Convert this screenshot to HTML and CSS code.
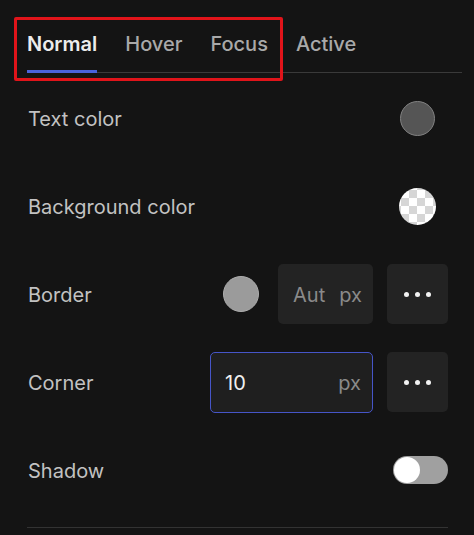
FILE: index.html
```html
<!DOCTYPE html>
<html>
<head>
<meta charset="utf-8">
<link rel="stylesheet" href="styles.css">
</head>
<body>
<div class="panel">
  <div class="tabs">
    <div class="tab active">Normal</div>
    <div class="tab">Hover</div>
    <div class="tab">Focus</div>
    <div class="tab">Active</div>
  </div>
  <div class="highlight"></div>

  <div class="rows">
    <div class="row">
      <span class="label">Text color</span>
      <div class="controls"><span class="swatch swatch-dark"></span></div>
    </div>
    <div class="row">
      <span class="label">Background color</span>
      <div class="controls"><span class="swatch swatch-checker"></span></div>
    </div>
    <div class="row">
      <span class="label">Border</span>
      <div class="controls">
        <span class="swatch swatch-gray"></span>
        <div class="field field-small"><span class="placeholder">Aut</span><span class="unit">px</span></div>
        <div class="more"><i></i><i></i><i></i></div>
      </div>
    </div>
    <div class="row">
      <span class="label">Corner</span>
      <div class="controls">
        <div class="field field-wide focused"><span class="value">10</span><span class="unit">px</span></div>
        <div class="more"><i></i><i></i><i></i></div>
      </div>
    </div>
    <div class="row">
      <span class="label">Shadow</span>
      <div class="controls"><span class="toggle"><span class="knob"></span></span></div>
    </div>
  </div>
  <div class="divider"></div>
</div>
</body>
</html>
```

FILE: styles.css
```css
html, body {
  margin: 0;
  padding: 0;
  background: #141414;
}
body {
  font-family: Inter, "Noto Sans", sans-serif;
  width: 474px;
  height: 535px;
  overflow: hidden;
}
.panel {
  position: relative;
}
.tabs {
  display: flex;
  gap: 28px;
  margin: 0 12px 0 27px;
  padding-top: 32px;
  border-bottom: 1px solid #3a3a3a;
}
.tab {
  font-size: 20px;
  line-height: 24px;
  font-weight: 500;
  color: #a9a9a9;
  padding-bottom: 16px;
}
.tab.active {
  color: #ececec;
  font-weight: 600;
  padding-bottom: 14px;
  border-bottom: 3px solid #4a63dc;
  margin-bottom: -1px;
}
.highlight {
  position: absolute;
  left: 14px;
  top: 17px;
  width: 269px;
  height: 64px;
  box-sizing: border-box;
  border: 3px solid #e0141a;
  border-radius: 2px;
}
.rows {
  padding-top: 1px;
}
.row {
  height: 88px;
  display: flex;
  align-items: center;
  justify-content: space-between;
  padding: 0 26px 0 28px;
}
.label {
  font-size: 20px;
  color: #c2c2c2;
  padding-top: 2px;
}
.controls {
  display: flex;
  align-items: center;
}
.swatch {
  display: block;
  border-radius: 50%;
  box-sizing: border-box;
}
.swatch-dark {
  width: 35px;
  height: 35px;
  background: #555;
  border: 1px solid #828282;
  margin-right: 13px;
}
.swatch-checker {
  width: 37px;
  height: 37px;
  margin-right: 12px;
  background-color: #fff;
  background-image: conic-gradient(#d6d6d6 25%, #fff 0 50%, #d6d6d6 0 75%, #fff 0);
  background-size: 16px 16px;
  background-position: 2px 2px;
}
.swatch-gray {
  width: 36px;
  height: 36px;
  background: #9b9b9b;
  border: 1px solid #adadad;
  margin-right: 19px;
}
.field {
  height: 60px;
  box-sizing: border-box;
  border-radius: 5px;
  background: #232323;
  display: flex;
  align-items: center;
  justify-content: space-between;
  padding: 2px 11px 0 15px;
  font-size: 20px;
  margin-right: 14px;
  overflow: hidden;
}
.field-small {
  width: 95px;
}
.field-wide {
  width: 163px;
  height: 61px;
  padding-left: 14px;
}
.focused {
  background: #1f1f1f;
  border: 1px solid #4655c8;
}
.placeholder {
  color: #8a8a8a;
}
.value {
  color: #f0f0f0;
}
.unit {
  color: #8a8a8a;
}
.more {
  width: 61px;
  height: 60px;
  border-radius: 5px;
  background: #232323;
  display: flex;
  align-items: center;
  justify-content: center;
  gap: 6px;
}
.more i {
  display: block;
  width: 5px;
  height: 5px;
  border-radius: 50%;
  background: #f2f2f2;
}
.toggle {
  display: flex;
  align-items: center;
  width: 55px;
  height: 28px;
  border-radius: 14px;
  background: #a0a0a0;
  padding: 1px;
  box-sizing: border-box;
}
.knob {
  display: block;
  width: 26px;
  height: 26px;
  border-radius: 50%;
  background: #fff;
}
.divider {
  margin: 13px 26px 0 27px;
  height: 1px;
  background: #333;
}
```
